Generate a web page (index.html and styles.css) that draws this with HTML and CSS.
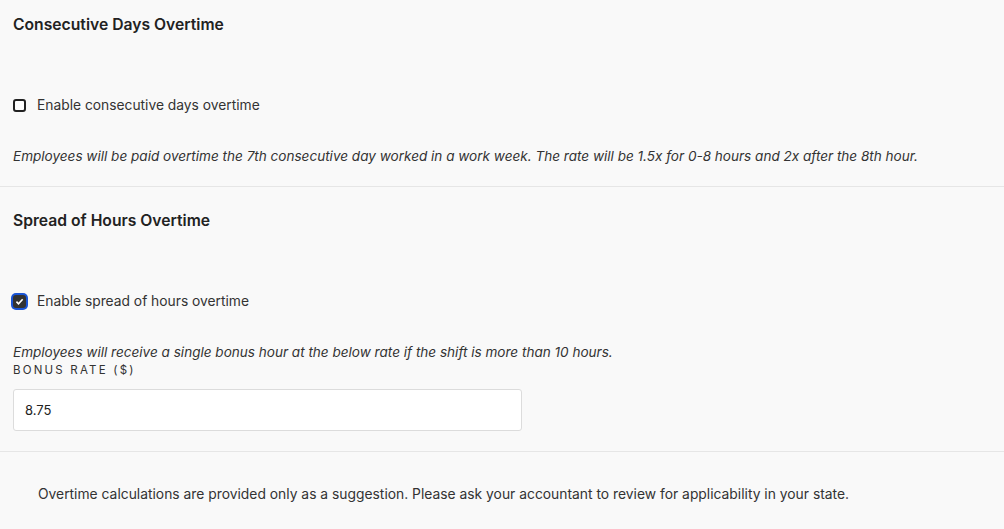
FILE: index.html
```html
<!DOCTYPE html>
<html lang="en">
<head>
    <meta charset="UTF-8">
    <title>Overtime Settings</title>
    <link rel="stylesheet" href="styles.css">
</head>
<body>
    <section class="section section-first">
        <h3 class="section-title">Consecutive Days Overtime</h3>
        <label class="check-row">
            <input type="checkbox" class="check">
            <span>Enable consecutive days overtime</span>
        </label>
        <p class="note">Employees will be paid overtime the 7th consecutive day worked in a work week. The rate will be 1.5x for 0-8 hours and 2x after the 8th hour.</p>
    </section>

    <section class="section">
        <h3 class="section-title">Spread of Hours Overtime</h3>
        <label class="check-row">
            <input type="checkbox" class="check focused" checked>
            <span>Enable spread of hours overtime</span>
        </label>
        <p class="note note-tight">Employees will receive a single bonus hour at the below rate if the shift is more than 10 hours.</p>
        <label class="field-label" for="bonusRate">BONUS RATE ($)</label>
        <input type="text" id="bonusRate" class="text-input" value="8.75">
    </section>

    <p class="footer-note">Overtime calculations are provided only as a suggestion. Please ask your accountant to review for applicability in your state.</p>
</body>
</html>
```

FILE: styles.css
```css
body {
    margin: 0;
    background-color: #f9f9f9;
    font-family: Inter, "Noto Sans", sans-serif;
    color: #333;
}
.section {
    padding: 25px 13px 0 13px;
    border-bottom: 1px solid #e6e6e6;
}
.section-first {
    padding-top: 16px;
}
.section-title {
    margin: 0;
    font-size: 15.7px;
    font-weight: 600;
    color: #222;
    line-height: 18px;
}
.check-row {
    display: flex;
    align-items: center;
    gap: 11px;
    margin-top: 62px;
    font-size: 13.8px;
    line-height: 18px;
    color: #333;
}
.check {
    appearance: none;
    -webkit-appearance: none;
    margin: 0;
    width: 13px;
    height: 13px;
    border: 2px solid #222;
    border-radius: 3px;
    background: #fff;
    box-sizing: border-box;
}
.check:checked {
    background-color: #333;
    border-color: #333;
    background-image: url("data:image/svg+xml,%3Csvg xmlns='http://www.w3.org/2000/svg' viewBox='0 0 10 10'%3E%3Cpath d='M1.6 5.2l2.3 2.3 4.6-5' fill='none' stroke='white' stroke-width='1.8'/%3E%3C/svg%3E");
    background-size: 100%;
}
.check.focused {
    box-shadow: 0 0 0 2px #1a55d6;
}
.note {
    margin: 33px 0 0 0;
    padding-bottom: 21px;
    font-size: 13.55px;
    font-style: italic;
    line-height: 18px;
    color: #333;
}
.note.note-tight {
    padding-bottom: 0;
}
.field-label {
    display: block;
    margin-top: 2px;
    font-size: 11.5px;
    letter-spacing: 2.2px;
    line-height: 14px;
    color: #333;
}
.text-input {
    display: block;
    margin: 12px 0 20px 0;
    width: 509px;
    height: 42px;
    box-sizing: border-box;
    padding: 0 11px;
    border: 1px solid #dcdcdc;
    border-radius: 3px;
    background: #fff;
    font-family: Inter, "Noto Sans", sans-serif;
    font-size: 13px;
    color: #222;
}
.footer-note {
    margin: 0;
    padding: 33px 38px;
    font-size: 13.85px;
    line-height: 18px;
    color: #333;
}
```
